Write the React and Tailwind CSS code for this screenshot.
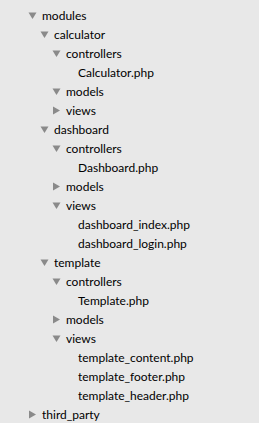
import React from 'react';

const tree = [
    {
        name: 'modules', open: true, children: [
            {
                name: 'calculator', open: true, children: [
                    { name: 'controllers', open: true, children: [{ name: 'Calculator.php' }] },
                    { name: 'models', open: true, children: [] },
                    { name: 'views', open: false, children: [] },
                ]
            },
            {
                name: 'dashboard', open: true, children: [
                    { name: 'controllers', open: true, children: [{ name: 'Dashboard.php' }] },
                    { name: 'models', open: false, children: [] },
                    { name: 'views', open: true, children: [{ name: 'dashboard_index.php' }, { name: 'dashboard_login.php' }] },
                ]
            },
            {
                name: 'template', open: true, children: [
                    { name: 'controllers', open: true, children: [{ name: 'Template.php' }] },
                    { name: 'models', open: false, children: [] },
                    { name: 'views', open: true, children: [{ name: 'template_content.php' }, { name: 'template_footer.php' }, { name: 'template_header.php' }] },
                ]
            },
        ]
    },
    { name: 'third_party', open: false, children: [] },
];

const Arrow = ({ open }) => (
    <svg width="9" height="9" viewBox="0 0 9 9" className="shrink-0">
        {open
            ? <polygon points="0.5,1.5 8.5,1.5 4.5,8" fill="#8a8a8a" />
            : <polygon points="1,0.5 8,4.5 1,8.5" fill="#8a8a8a" />}
    </svg>
);

const Node = ({ node, level }) => {
    const isDir = !!node.children;
    return (
        <>
            <div className="h-[19px] flex items-center" style={{ paddingLeft: 28 + level * 12 }}>
                <div className="w-[14px] flex items-center">
                    {isDir && <Arrow open={node.open} />}
                </div>
                <span className="whitespace-nowrap">{node.name}</span>
            </div>
            {isDir && node.open && node.children.map((c, i) => (
                <Node key={i} node={c} level={level + 1} />
            ))}
        </>
    );
};

export default function App() {
    return (
        <div className="w-[259px] h-[423px] overflow-hidden bg-[#e8e8e8] pt-[6px] text-[12px] text-[#000] font-['Lato',sans-serif]">
            {tree.map((n, i) => <Node key={i} node={n} level={0} />)}
        </div>
    );
}
